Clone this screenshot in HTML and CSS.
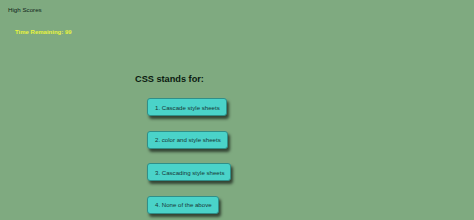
FILE: index.html
```html
<!DOCTYPE html>
<html lang="en">

<head>
  <meta charset="UTF-8" />
  <meta name="viewport" content="width=device-width, initial-scale=1.0" />
  <title>Code Quiz</title>
  <link rel="stylesheet" href="styles.css">
</head>

<body>
  <div class="header">
    <a href="javascript:;" class="scores">High Scores</a>
    <div class="timer">Time Remaining: <span>99</span></div>
  </div>
  <div class="quiz">
    <h2 class="question">CSS stands for:</h2>
    <div class="answers">
      <button class="answer">1. Cascade style sheets</button>
      <button class="answer">2. color and style sheets</button>
      <button class="answer">3. Cascading style sheets</button>
      <button class="answer">4. None of the above</button>
    </div>
  </div>
</body>

</html>
```

FILE: styles.css
```css
* {
  padding: 0;
  margin: 0;
  box-sizing: border-box;
}

body {
  background: #7faa80;
  font-family: "Liberation Sans", Arial, sans-serif;
  width: 474px;
  height: 220px;
  overflow: hidden;
}

.header {
  display: flex;
  flex-direction: column;
  padding: 6px 0 0 8px;
}

.scores {
  font-size: 6.2px;
  line-height: 8px;
  color: #10241a;
  text-decoration: none;
}

.timer {
  margin: 14px 0 0 7px;
  font-size: 6px;
  line-height: 8px;
  font-weight: bold;
  color: #e8f43c;
}

.quiz {
  display: flex;
  flex-direction: column;
  padding-left: 135px;
  margin-top: 38px;
}

.question {
  font-size: 9.2px;
  line-height: 11px;
  font-weight: bold;
  color: #0b1a10;
}

.answers {
  display: flex;
  flex-direction: column;
  align-items: flex-start;
  gap: 14.5px;
  margin: 13px 0 0 12px;
}

.answer {
  height: 18px;
  padding: 0 6px 0 7px;
  font-family: inherit;
  font-size: 6.1px;
  color: #173636;
  background: #4ad3c9;
  border: 1px solid #2f8f88;
  border-radius: 3px;
  box-shadow: 2px 3px 3px rgba(0, 0, 0, 0.6);
  cursor: pointer;
}
```
